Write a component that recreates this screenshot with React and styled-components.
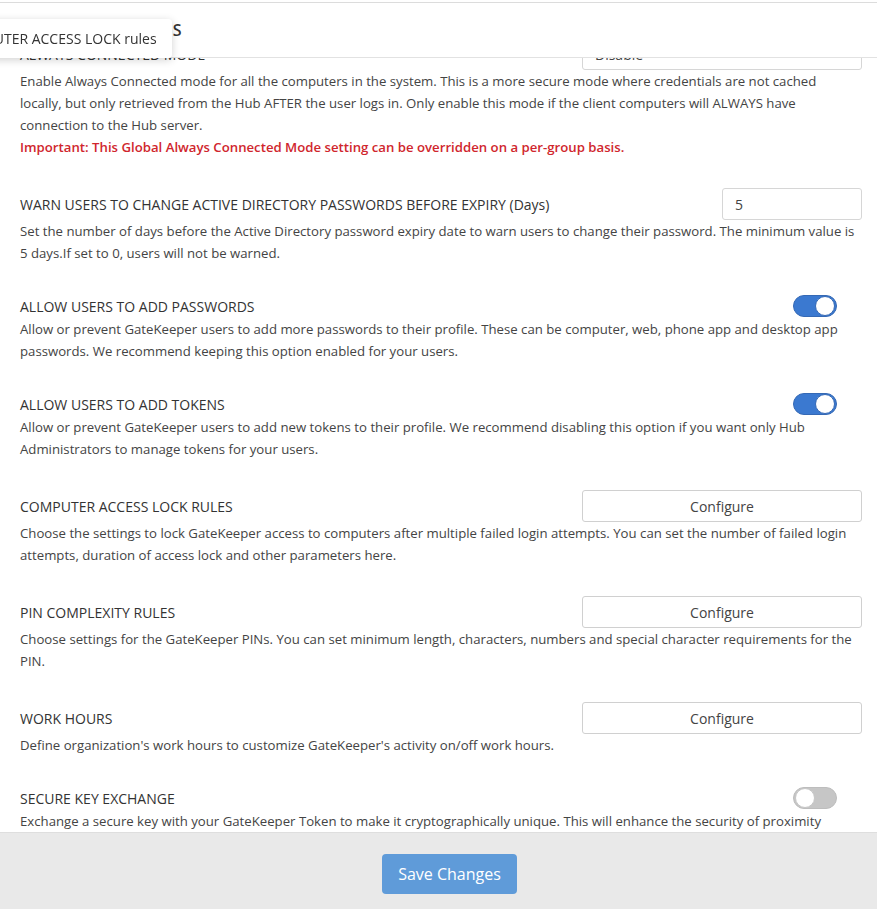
import { useLayoutEffect, useRef } from 'react';
import styled, { createGlobalStyle } from 'styled-components';

const GlobalStyle = createGlobalStyle`
  html, body {
    margin: 0;
    padding: 0;
    background: #fff;
  }
  body {
    font-family: 'Open Sans', 'Noto Sans', sans-serif;
    color: #333;
  }
  * { box-sizing: border-box; }
`

const settings = [
  {
    title: 'Always Connected Mode',
    control: 'select',
    value: 'Disable',
    text: 'Enable Always Connected mode for all the computers in the system. This is a more secure mode where credentials are not cached locally, but only retrieved from the Hub AFTER the user logs in. Only enable this mode if the client computers will ALWAYS have connection to the Hub server.',
    warning: 'Important: This Global Always Connected Mode setting can be overridden on a per-group basis.',
  },
  {
    title: 'Warn users to change Active Directory passwords before expiry',
    suffix: ' (Days)',
    control: 'input',
    value: '5',
    text: 'Set the number of days before the Active Directory password expiry date to warn users to change their password. The minimum value is 5 days.If set to 0, users will not be warned.',
  },
  {
    title: 'Allow users to add passwords',
    control: 'toggle',
    on: true,
    text: 'Allow or prevent GateKeeper users to add more passwords to their profile. These can be computer, web, phone app and desktop app passwords. We recommend keeping this option enabled for your users.',
  },
  {
    title: 'Allow users to add tokens',
    control: 'toggle',
    on: true,
    text: 'Allow or prevent GateKeeper users to add new tokens to their profile. We recommend disabling this option if you want only Hub Administrators to manage tokens for your users.',
  },
  {
    title: 'Computer access lock rules',
    control: 'button',
    text: 'Choose the settings to lock GateKeeper access to computers after multiple failed login attempts. You can set the number of failed login attempts, duration of access lock and other parameters here.',
  },
  {
    title: 'PIN complexity rules',
    control: 'button',
    text: 'Choose settings for the GateKeeper PINs. You can set minimum length, characters, numbers and special character requirements for the PIN.',
  },
  {
    title: 'Work hours',
    control: 'button',
    text: "Define organization's work hours to customize GateKeeper's activity on/off work hours.",
  },
  {
    title: 'Secure key exchange',
    control: 'toggle',
    on: false,
    text: 'Exchange a secure key with your GateKeeper Token to make it cryptographically unique. This will enhance the security of proximity based features such as walk-away lock and auto-login.',
  },
]

function Control({ item }) {
  if (item.control === 'select') {
    return (
      <Select defaultValue={item.value}>
        <option>Disable</option>
        <option>Enable</option>
      </Select>
    )
  }
  if (item.control === 'input') {
    return <NumberInput type="text" defaultValue={item.value} />
  }
  if (item.control === 'toggle') {
    return <Toggle on={item.on ? 1 : 0}><Knob on={item.on ? 1 : 0} /></Toggle>
  }
  return <ConfigButton>Configure</ConfigButton>
}

function App() {
  const scroller = useRef(null)

  useLayoutEffect(() => {
    if (scroller.current) scroller.current.scrollTop = 40
  }, [])

  return (
    <Frame>
      <GlobalStyle />
      <Tooltip>COMPUTER ACCESS LOCK rules</Tooltip>
      <Scroller ref={scroller}>
        <Header>
          <Heading>GLOBAL SETTINGS</Heading>
        </Header>
        <Content>
          {settings.map((item, index) => (
            <Section key={index}>
              <Row toggle={item.control === 'toggle' ? 1 : 0}>
                <Title>
                  {item.title}
                  {item.suffix && <Suffix>{item.suffix}</Suffix>}
                </Title>
                <Control item={item} />
              </Row>
              <Description>{item.text}</Description>
              {item.warning && <Warning>{item.warning}</Warning>}
            </Section>
          ))}
        </Content>
      </Scroller>
      <Footer>
        <SaveButton>Save Changes</SaveButton>
      </Footer>
    </Frame>
  );
}

export default App;


const Frame = styled.div`
  position: relative;
  height: 100vh;
  display: flex;
  flex-direction: column;
  padding-top: 2px;
  overflow: hidden;
`

const Scroller = styled.div`
  flex: 1;
  overflow-y: auto;
  border-top: 1px solid #dcdcdc;
  scrollbar-width: none;

  &::-webkit-scrollbar {
    display: none;
  }
`

const Header = styled.div`
  position: sticky;
  top: 0;
  z-index: 2;
  height: 55px;
  background: #fff;
  border-bottom: 1px solid #e2e2e2;
  display: flex;
  align-items: center;
  padding-left: 41px;
`

const Heading = styled.h2`
  margin: 0;
  font-size: 16px;
  font-weight: 600;
  color: #333;
`

const Tooltip = styled.div`
  position: absolute;
  z-index: 5;
  top: 19px;
  left: -62px;
  height: 39px;
  padding: 0 15px;
  display: flex;
  align-items: center;
  background: #fff;
  border-radius: 4px;
  box-shadow: 0 2px 8px rgba(0, 0, 0, 0.18);
  font-size: 14px;
  color: #333;
  white-space: nowrap;
`

const Content = styled.div`
  padding: 20px 15px 20px 20px;
`

const Section = styled.section`
  margin-bottom: 30px;
`

const Row = styled.div`
  display: flex;
  align-items: center;
  justify-content: space-between;
  gap: 20px;
  min-height: ${(props) => (props.toggle ? '24px' : '32px')};
`

const Title = styled.div`
  font-size: 14px;
  text-transform: uppercase;
  color: #333;
`

const Suffix = styled.span`
  text-transform: none;
`

const Description = styled.p`
  margin: 0;
  max-width: 838px;
  font-size: 13.2px;
  line-height: 22px;
  color: #444;
`

const Warning = styled.p`
  margin: 0;
  font-size: 13.2px;
  line-height: 22px;
  font-weight: 600;
  color: #d0262d;
`

const Select = styled.select`
  width: 280px;
  height: 32px;
  padding: 0 12px;
  border: 1px solid #d6d6d6;
  border-radius: 3px;
  background: #fff;
  font-family: inherit;
  font-size: 14px;
  color: #444;
  appearance: none;
`

const NumberInput = styled.input`
  width: 140px;
  height: 32px;
  padding: 0 12px;
  border: 1px solid #d6d6d6;
  border-radius: 3px;
  font-family: inherit;
  font-size: 14px;
  color: #444;
`

const ConfigButton = styled.button`
  width: 280px;
  height: 32px;
  border: 1px solid #d0d0d0;
  border-radius: 3px;
  background: #fff;
  font-family: inherit;
  font-size: 14px;
  color: #444;
  cursor: pointer;
`

const Toggle = styled.div`
  width: 44px;
  height: 22px;
  margin-right: 25px;
  border-radius: 11px;
  background: ${(props) => (props.on ? '#3b79d0' : '#c6c6c6')};
  border: 1px solid ${(props) => (props.on ? '#3569b5' : '#bdbdbd')};
  display: flex;
  align-items: center;
  justify-content: ${(props) => (props.on ? 'flex-end' : 'flex-start')};
  padding: 0 1px;
  flex-shrink: 0;
`

const Knob = styled.div`
  width: 20px;
  height: 20px;
  border-radius: 50%;
  background: #fff;
  border: 1px solid ${(props) => (props.on ? '#3569b5' : '#c6c6c6')};
`

const Footer = styled.div`
  height: 77px;
  flex-shrink: 0;
  background: #e9e9e9;
  border-top: 1px solid #dedede;
  display: flex;
  align-items: flex-start;
  justify-content: center;
  padding: 21px 0 0 22px;
`

const SaveButton = styled.button`
  width: 135px;
  height: 40px;
  border: none;
  border-radius: 4px;
  background: #5f9bd9;
  color: #fff;
  font-family: inherit;
  font-size: 16px;
  cursor: pointer;
`
